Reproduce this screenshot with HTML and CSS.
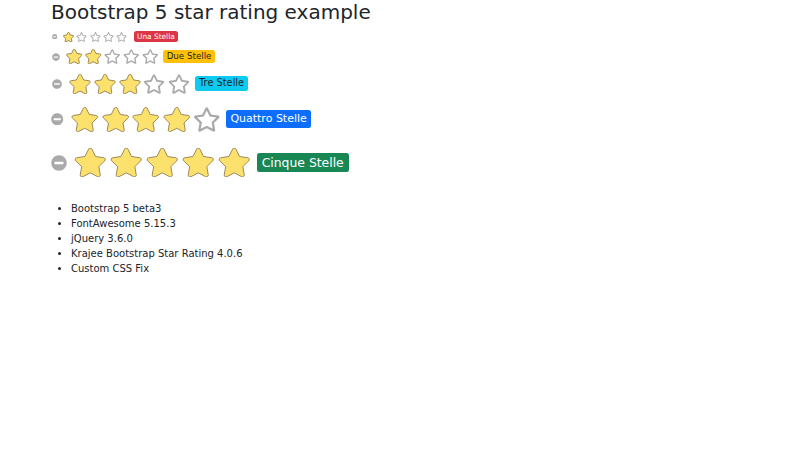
FILE: index.html
```html
<!DOCTYPE html>
<html lang="it">
<head>
<meta charset="utf-8">
<title>Bootstrap 5 star rating example</title>
<link rel="stylesheet" href="styles.css">
</head>
<body>
<svg class="defs" aria-hidden="true">
  <symbol id="star-solid" viewBox="0 0 576 512">
    <path vector-effect="non-scaling-stroke" d="M259.3 17.8L194 150.2 47.9 171.5c-26.2 3.8-36.7 36.1-17.7 54.6l105.7 103-25 145.5c-4.5 26.3 23.2 46 46.4 33.7L288 439.6l130.7 68.7c23.2 12.2 50.9-7.4 46.4-33.7l-25-145.5 105.7-103c19-18.5 8.5-50.8-17.7-54.6L382 150.2 316.7 17.8c-11.7-23.6-45.6-23.9-57.4 0z"/>
  </symbol>
  <symbol id="star-empty" viewBox="0 0 576 512">
    <path d="M528.1 171.5L382 150.2 316.7 17.8c-11.7-23.6-45.6-23.9-57.4 0L194 150.2 47.9 171.5c-26.2 3.8-36.7 36.1-17.7 54.6l105.7 103-25 145.5c-4.5 26.3 23.2 46 46.4 33.7L288 439.6l130.7 68.7c23.2 12.2 50.9-7.4 46.4-33.7l-25-145.5 105.7-103c19-18.5 8.5-50.8-17.7-54.6zM388.6 312.3l23.7 138.4L288 385.4l-124.3 65.3 23.7-138.4-100.6-98 139-20.2 62.2-126 62.2 126 139 20.2-100.6 98z"/>
  </symbol>
  <symbol id="minus-circle" viewBox="0 0 512 512">
    <path d="M256 8C119 8 8 119 8 256s111 248 248 248 248-111 248-248S393 8 256 8zM124 296c-6.6 0-12-5.4-12-12v-56c0-6.6 5.4-12 12-12h264c6.6 0 12 5.4 12 12v56c0 6.6-5.4 12-12 12H124z"/>
  </symbol>
</svg>

<div class="container">
  <h1 class="title">Bootstrap 5 star rating example</h1>

  <div class="rating rating-xs">
    <svg class="clear"><use href="#minus-circle"/></svg>
    <span class="stars">
      <svg class="star on"><use href="#star-solid"/></svg>
      <svg class="star off"><use href="#star-empty"/></svg>
      <svg class="star off"><use href="#star-empty"/></svg>
      <svg class="star off"><use href="#star-empty"/></svg>
      <svg class="star off"><use href="#star-empty"/></svg>
    </span>
    <span class="badge bg-danger">Una Stella</span>
  </div>

  <div class="rating rating-sm">
    <svg class="clear"><use href="#minus-circle"/></svg>
    <span class="stars">
      <svg class="star on"><use href="#star-solid"/></svg>
      <svg class="star on"><use href="#star-solid"/></svg>
      <svg class="star off"><use href="#star-empty"/></svg>
      <svg class="star off"><use href="#star-empty"/></svg>
      <svg class="star off"><use href="#star-empty"/></svg>
    </span>
    <span class="badge bg-warning">Due Stelle</span>
  </div>

  <div class="rating rating-md">
    <svg class="clear"><use href="#minus-circle"/></svg>
    <span class="stars">
      <svg class="star on"><use href="#star-solid"/></svg>
      <svg class="star on"><use href="#star-solid"/></svg>
      <svg class="star on"><use href="#star-solid"/></svg>
      <svg class="star off"><use href="#star-empty"/></svg>
      <svg class="star off"><use href="#star-empty"/></svg>
    </span>
    <span class="badge bg-info">Tre Stelle</span>
  </div>

  <div class="rating rating-lg">
    <svg class="clear"><use href="#minus-circle"/></svg>
    <span class="stars">
      <svg class="star on"><use href="#star-solid"/></svg>
      <svg class="star on"><use href="#star-solid"/></svg>
      <svg class="star on"><use href="#star-solid"/></svg>
      <svg class="star on"><use href="#star-solid"/></svg>
      <svg class="star off"><use href="#star-empty"/></svg>
    </span>
    <span class="badge bg-primary">Quattro Stelle</span>
  </div>

  <div class="rating rating-xl">
    <svg class="clear"><use href="#minus-circle"/></svg>
    <span class="stars">
      <svg class="star on"><use href="#star-solid"/></svg>
      <svg class="star on"><use href="#star-solid"/></svg>
      <svg class="star on"><use href="#star-solid"/></svg>
      <svg class="star on"><use href="#star-solid"/></svg>
      <svg class="star on"><use href="#star-solid"/></svg>
    </span>
    <span class="badge bg-success">Cinque Stelle</span>
  </div>

  <ul class="libs">
    <li>Bootstrap 5 beta3</li>
    <li>FontAwesome 5.15.3</li>
    <li>jQuery 3.6.0</li>
    <li>Krajee Bootstrap Star Rating 4.0.6</li>
    <li>Custom CSS Fix</li>
  </ul>
</div>
</body>
</html>
```

FILE: styles.css
```css
html, body {
  margin: 0;
  padding: 0;
  background: #fff;
}

body {
  font-family: "DejaVu Sans", "Noto Sans", sans-serif;
  font-size: 10px;
  line-height: 1.5;
  color: #212529;
}

.defs {
  position: absolute;
  width: 0;
  height: 0;
  overflow: hidden;
}

.container {
  padding-left: 51px;
}

.title {
  margin: 0 0 3px;
  font-size: 20px;
  font-weight: 500;
  line-height: 24px;
}

/* star rating rows */
.rating {
  display: flex;
  align-items: center;
}

.clear {
  fill: #aaa;
  flex: none;
}

.stars {
  display: flex;
  align-items: center;
}

.star {
  flex: none;
  overflow: visible;
}

.star.on {
  fill: #fde16d;
  stroke: #8f7e50;
  stroke-width: 0.9px;
}

.star.off {
  fill: #aaa;
}

.badge {
  display: inline-block;
  line-height: 1.1;
  border-radius: 2.5px;
  color: #fff;
  white-space: nowrap;
}

.bg-danger { background: #dc3545; }
.bg-warning { background: #ffc107; color: #212529; }
.bg-info { background: #0dcaf0; color: #212529; }
.bg-primary { background: #0d6efd; }
.bg-success { background: #198754; }

/* sizes */
.rating-xs { height: 19px; }
.rating-xs .clear { width: 5.5px; height: 5.5px; margin: 0 5.5px 0 1px; }
.rating-xs .stars { gap: 2.25px; }
.rating-xs .star { width: 11px; height: 10px; }
.rating-xs .badge { font-size: 7.4px; padding: 2px 3px 1.8px; margin-left: 7px; }

.rating-sm { height: 21px; }
.rating-sm .clear { width: 8px; height: 8px; margin: 0 6px 0 1px; }
.rating-sm .stars { gap: 2.4px; }
.rating-sm .star { width: 16.5px; height: 15px; }
.rating-sm .badge { font-size: 8.7px; padding: 2px 3.3px; margin-left: 5.3px; }

.rating-md { height: 33px; }
.rating-md .clear { width: 10px; height: 10px; margin: 0 7.7px 0 0.5px; }
.rating-md .stars { gap: 2.75px; }
.rating-md .star { width: 22px; height: 20px; }
.rating-md .badge { font-size: 9.8px; padding: 2px 4.2px; margin-left: 4.7px; }

.rating-lg { height: 38px; }
.rating-lg .clear { width: 12.5px; height: 12.5px; margin: 0 7.5px 0 0; }
.rating-lg .stars { gap: 3.1px; }
.rating-lg .star { width: 27.5px; height: 25px; }
.rating-lg .badge { font-size: 11px; padding: 3px 4.5px; margin-left: 5px; }

.rating-xl { height: 49px; }
.rating-xl .clear { width: 16px; height: 16px; margin: 0 6.7px 0 0.3px; }
.rating-xl .stars { gap: 3.6px; }
.rating-xl .star { width: 32.5px; height: 29px; }
.rating-xl .badge { font-size: 12.4px; padding: 3px 4.8px; margin-left: 6px; }

/* library list */
.libs {
  margin: 13.5px 0 0;
  padding-left: 20px;
}
```
